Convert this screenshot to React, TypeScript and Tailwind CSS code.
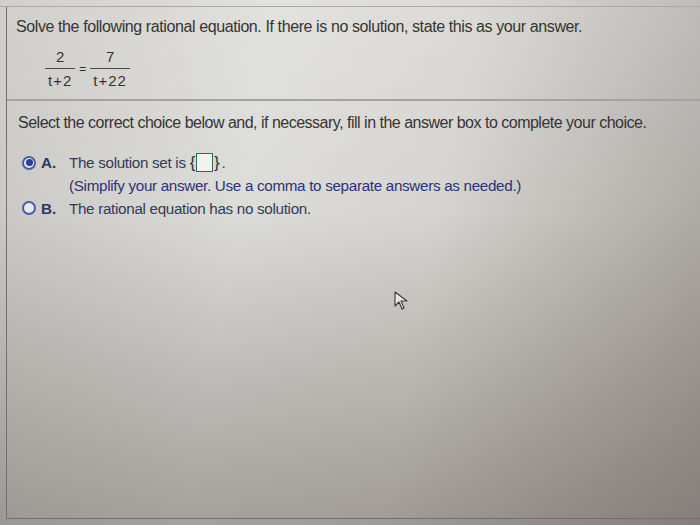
import React from "react";

function Fraction({ num, den }: { num: string; den: string }) {
  return (
    <span className="inline-flex flex-col items-center leading-none">
      <span className="px-[4px] pb-[4px]">{num}</span>
      <span className="w-full border-t border-[#4a4a4a]" />
      <span className="px-[3px] pt-[4px] tracking-[1px]">{den}</span>
    </span>
  );
}

function Radio({ checked }: { checked?: boolean }) {
  return (
    <span className="flex h-[14px] w-[14px] items-center justify-center rounded-full border-2 border-[#4a5fa8] bg-[#e8e8ee]">
      {checked && <span className="h-[7px] w-[7px] rounded-full bg-[#2c3f8c]" />}
    </span>
  );
}

export default function App() {
  return (
    <div
      className="relative h-[525px] w-[700px] overflow-hidden bg-[linear-gradient(100deg,#c9c7c3_0%,#dcdcd8_35%,#d6d4d0_60%,#a7a29e_100%)] text-[#353535]"
      style={{ fontFamily: '"Liberation Sans", Arial, sans-serif' }}
    >
      {/* lighting from the photo */}
      <div className="pointer-events-none absolute inset-0 bg-[linear-gradient(180deg,rgba(255,255,255,0.15)_0%,rgba(255,255,255,0)_40%,rgba(80,70,66,0.4)_100%)]" />

      <div className="relative flex h-full flex-col">
        <div className="mt-[6px] border-t border-[#a9a9a6]" />

        <div className="ml-[6px] mb-[6px] flex flex-1 flex-col border-b border-l border-[#6f6f78]">
          {/* question */}
          <div className="px-[9px] pt-[8px]">
            <p className="text-[16px] tracking-[-0.4px]">
              Solve the following rational equation. If there is no solution, state this as your answer.
            </p>
            <div className="mt-[10px] ml-[29px] flex items-center gap-[4px] text-[15px]">
              <Fraction num="2" den="t+2" />
              <span className="text-[12px]">=</span>
              <Fraction num="7" den="t+22" />
            </div>
          </div>

          <div className="mt-[11px] border-t-2 border-[#a3a3a0]" />

          {/* choices */}
          <div className="px-[9px] pt-[10px]">
            <p className="ml-[2px] text-[16px] tracking-[-0.5px]">
              Select the correct choice below and, if necessary, fill in the answer box to complete your choice.
            </p>

            <div className="mt-[16px] flex flex-col text-[15.2px] leading-[23px] text-[#343a5a]">
              <div className="flex items-start">
                <div className="mt-[4px] ml-[6px] flex w-[47px] items-center gap-[5px] leading-none">
                  <Radio checked />
                  <span className="font-bold text-[#2c3466]">A.</span>
                </div>
                <div className="flex flex-col">
                  <div className="flex items-center tracking-[-0.3px]">
                    <span>The solution set is</span>
                    <span className="ml-[4px] flex items-center text-[17px] text-[#333]">
                      {"{"}
                      <span className="mx-[1px] inline-block h-[19px] w-[17px] border border-[#2f6a5d] bg-[#f2f2ee]" />
                      {"}"}
                    </span>
                    <span className="ml-[2px]">.</span>
                  </div>
                  <span className="tracking-[-0.3px] text-[#2b3478]">
                    (Simplify your answer. Use a comma to separate answers as needed.)
                  </span>
                </div>
              </div>
              <div className="flex items-center">
                <div className="ml-[6px] flex w-[47px] items-center gap-[5px] leading-none">
                  <Radio />
                  <span className="font-bold text-[#2c3466]">B.</span>
                </div>
                <span className="tracking-[-0.3px]">The rational equation has no solution.</span>
              </div>
            </div>
          </div>
        </div>
      </div>

      {/* mouse pointer */}
      <svg className="absolute left-[394px] top-[291px]" width="16" height="20" viewBox="0 0 16 20">
        <path d="M1 1 L1 15 L5 11 L8 18 L10 17 L7 10 L13 10 Z" fill="#e6e6e2" stroke="#3a3a3a" strokeWidth="1.1" strokeLinejoin="round" />
      </svg>
    </div>
  );
}
